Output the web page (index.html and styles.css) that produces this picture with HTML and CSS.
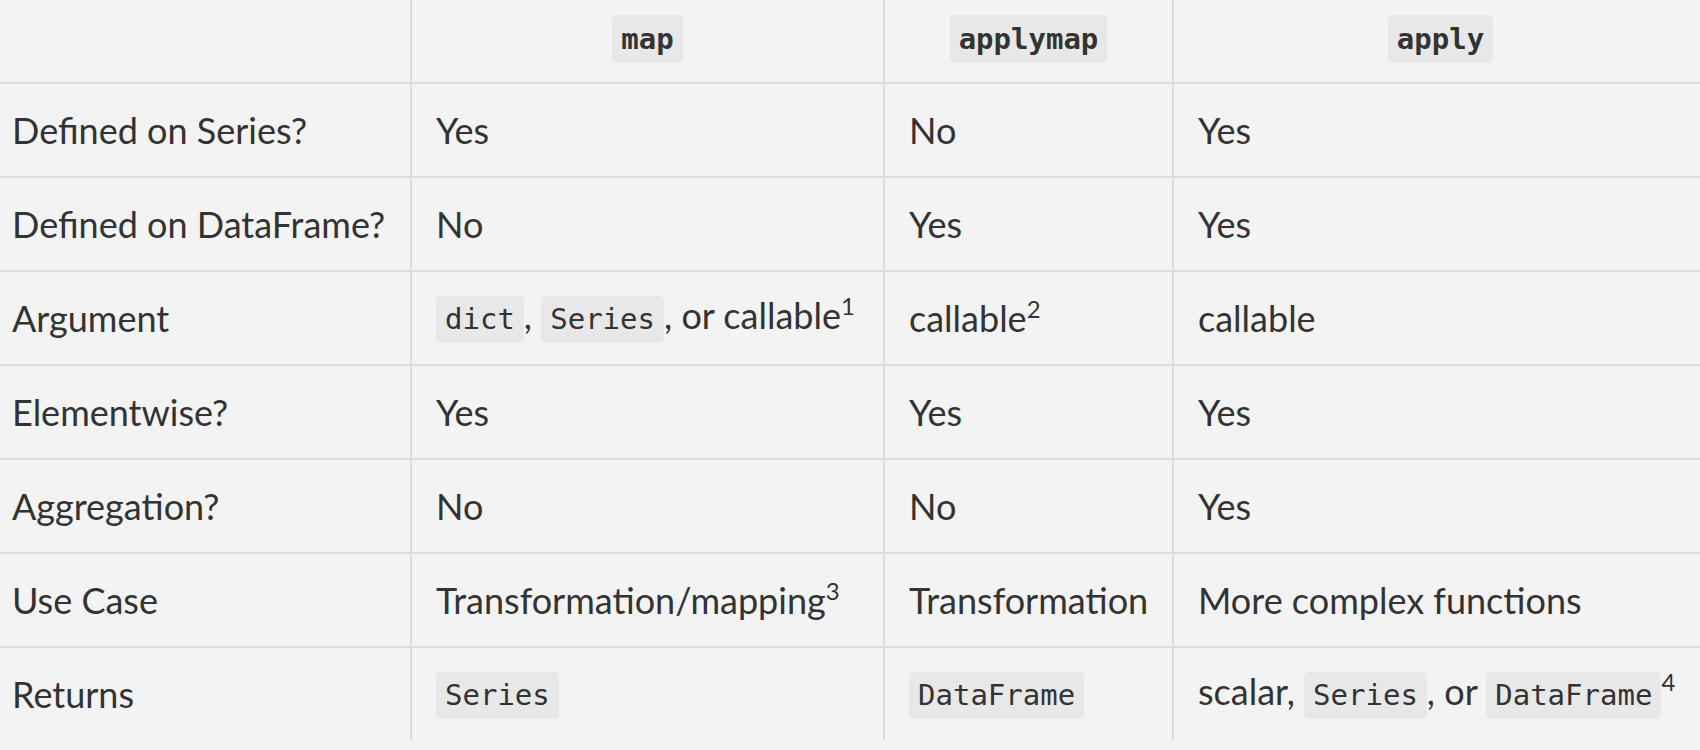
FILE: index.html
```html
<!DOCTYPE html>
<html>
<head>
<meta charset="utf-8">
<link rel="stylesheet" href="styles.css">
</head>
<body>
<table class="cmp">
  <colgroup>
    <col class="c1"><col class="c2"><col class="c3"><col class="c4">
  </colgroup>
  <thead>
    <tr>
      <th></th>
      <th><code class="hc">map</code></th>
      <th><code class="hc">applymap</code></th>
      <th><code class="hc">apply</code></th>
    </tr>
  </thead>
  <tbody>
    <tr><td>Defined on Series?</td><td>Yes</td><td>No</td><td>Yes</td></tr>
    <tr><td>Defined on DataFrame?</td><td>No</td><td>Yes</td><td>Yes</td></tr>
    <tr><td>Argument</td><td><code>dict</code>, <code>Series</code>, or callable<sup>1</sup></td><td>callable<sup>2</sup></td><td>callable</td></tr>
    <tr><td>Elementwise?</td><td>Yes</td><td>Yes</td><td>Yes</td></tr>
    <tr><td>Aggregation?</td><td>No</td><td>No</td><td>Yes</td></tr>
    <tr><td>Use Case</td><td>Transformation/mapping<sup>3</sup></td><td>Transformation</td><td>More complex functions</td></tr>
    <tr class="last"><td>Returns</td><td><code>Series</code></td><td><code>DataFrame</code></td><td>scalar, <code>Series</code>, or <code>DataFrame</code><sup>4</sup></td></tr>
  </tbody>
</table>
</body>
</html>
```
FILE: styles.css
```css
html, body {
  margin: 0;
  padding: 0;
  background: #f3f3f3;
  overflow: hidden;
}
body {
  font-family: "Lato", "Liberation Sans", sans-serif;
  color: #333333;
}
.cmp {
  border-collapse: collapse;
  table-layout: fixed;
  width: 1707px;
}
.c1 { width: 411px; }
.c2 { width: 473px; }
.c3 { width: 289px; }
.c4 { width: 534px; }
.cmp th, .cmp td {
  border: 2px solid #dcdcdc;
  padding: 0 24px;
  font-size: 36px;
  font-weight: normal;
  text-align: left;
  white-space: nowrap;
}
.cmp tr > :first-child {
  border-left: none;
  padding-left: 12px;
}
.cmp tr > :last-child {
  border-right: none;
}
.cmp thead tr > * {
  border-top: none;
  height: 76px;
  text-align: center;
  padding-bottom: 6px;
}
.cmp tbody td {
  height: 92px;
}
.cmp tr.last td {
  border-bottom: none;
}
code {
  display: inline-block;
  font-family: "DejaVu Sans Mono", "Liberation Mono", monospace;
  font-size: 29px;
  line-height: 37px;
  background: #e8e8e8;
  border-radius: 5px;
  padding: 5px 9px;
  color: #333333;
}
code.hc {
  font-weight: bold;
  font-size: 29px;
  line-height: 34px;
  padding: 7px 9px;
  vertical-align: middle;
}
sup {
  font-size: 24px;
  line-height: 0;
  vertical-align: 14px;
}
```
